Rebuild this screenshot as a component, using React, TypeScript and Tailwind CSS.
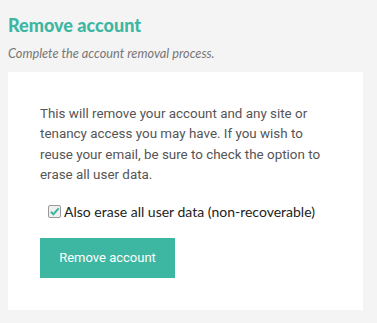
import React from "react";

export default function App() {
  return (
    <div className="min-h-[323px] w-[377px] bg-[#f4f4f4] px-2 pt-[13px] pb-[13px]">
      <h1 className="font-['Lato',sans-serif] text-[18px] font-black leading-[24px] text-[#3db6a2]">
        Remove account
      </h1>
      <p className="mt-[9px] font-['Lato',sans-serif] text-[12.75px] italic leading-[14px] text-[#777]">
        Complete the account removal process.
      </p>
      <div className="mt-[12px] w-[355px] bg-white px-8 pt-[32px] pb-[32px]">
        <p className="font-['Roboto',sans-serif] text-[13.4px] leading-[20.4px] text-[#555]">
          This will remove your account and any site or tenancy access you may have. If you wish to reuse your email, be sure to check the option to erase all user data.
        </p>
        <label className="mt-[15px] ml-2 flex items-center gap-[3px] whitespace-nowrap font-['Lato',sans-serif] text-[14px] text-[#222]">
          <span className="flex h-[13px] w-[13px] items-center justify-center rounded-[2px] border border-[#999] bg-[#f0f0f0]">
            <svg viewBox="0 0 12 12" className="h-[11px] w-[11px]">
              <path d="M2 6.2 L4.8 9 L10.5 2.5" fill="none" stroke="#3db6a2" strokeWidth="2.2" />
            </svg>
          </span>
          Also erase all user data (non-recoverable)
        </label>
        <button className="mt-[16px] flex h-[40px] w-[135px] items-center justify-center bg-[#3db6a2] font-['Roboto',sans-serif] text-[13px] text-white">
          Remove account
        </button>
      </div>
    </div>
  );
}
